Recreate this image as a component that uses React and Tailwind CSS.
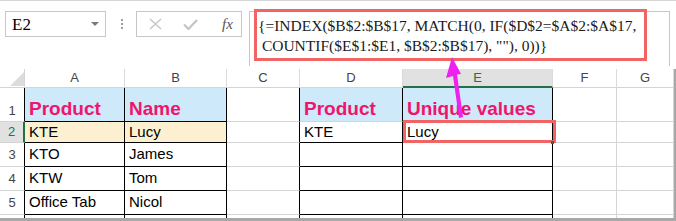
import React from 'react';

const sans = "font-['Liberation_Sans',Arial,sans-serif]";
const serif = "font-['Liberation_Serif','Times_New_Roman',serif]";

const cols = ['A', 'B', 'C', 'D', 'E', 'F', 'G'];

// which columns belong to the two tables (black borders)
const tableCols = { A: true, B: true, D: true, E: true };

const rows = [
  { n: 1, cells: { A: 'Product', B: 'Name', D: 'Product', E: 'Unique values' } },
  { n: 2, cells: { A: 'KTE', B: 'Lucy', D: 'KTE', E: 'Lucy' } },
  { n: 3, cells: { A: 'KTO', B: 'James' } },
  { n: 4, cells: { A: 'KTW', B: 'Tom' } },
  { n: 5, cells: { A: 'Office Tab', B: 'Nicol' } },
];

const HeaderCell = ({ col }) => {
  const active = col === 'E';
  return (
    <div
      className={`flex items-center justify-center text-[13px] border-r border-r-[#dadada] ${
        active
          ? 'bg-[#e1e1e1] text-[#217346] border-b-2 border-b-[#217346]'
          : 'bg-white text-[#444] border-b border-b-[#d4d4d4]'
      }`}
    >
      {col}
    </div>
  );
};

const RowHead = ({ n }) => {
  if (n === 2) {
    return (
      <div className="flex items-center justify-center text-[13px] text-[#217346] bg-[#e1e1e1] border-r-2 border-r-[#217346] border-b border-b-[#d4d4d4]">
        {n}
      </div>
    );
  }
  return (
    <div
      className={`flex justify-center text-[13px] text-[#444] bg-white border-r border-r-black border-b border-b-[#d4d4d4] ${
        n === 1 ? 'items-end pb-[1px]' : 'items-center'
      }`}
    >
      {n}
    </div>
  );
};

const Cell = ({ row, col }) => {
  const text = row.cells[col];
  const inTable = tableCols[col];
  const isHead = row.n === 1;
  let bg = 'bg-white';
  if (inTable && isHead) bg = 'bg-[#cde9fa]';
  if ((col === 'A' || col === 'B') && row.n === 2) bg = 'bg-[#fdf0d0]';

  // right border black where a table edge sits
  const rightBlack = col === 'A' || col === 'B' || col === 'C' || col === 'D' || col === 'E';
  const bottomBlack = inTable && !(isHead && col === 'D');

  return (
    <div
      className={`relative flex pl-[4px] whitespace-nowrap ${bg} border-r ${
        rightBlack ? 'border-r-black' : 'border-r-[#d4d4d4]'
      } border-b ${bottomBlack ? 'border-b-black' : 'border-b-[#d4d4d4]'} ${
        isHead
          ? 'items-end pb-[1px] text-[19px] font-bold text-[#f0156c] leading-[22px]'
          : 'items-center text-[15px] text-black'
      }`}
    >
      {text}
      {col === 'E' && row.n === 2 && (
        <>
          <div className="absolute z-10 left-0 -top-[2px] w-[153px] h-[23px] border-[3px] border-[#f26363]" />
          <div className="absolute z-10 -right-[2px] -bottom-[2px] w-[3px] h-[3px] bg-[#217346]" />
        </>
      )}
    </div>
  );
};

const App = () => {
  return (
    <div className={`relative w-[676px] h-[221px] overflow-hidden bg-white ${sans}`}>
      {/* top bar */}
      <div className="h-[69px] border-t border-t-[#d6d6d6] flex items-start">
        <div className="ml-[5px] mt-[10px] w-[101px] h-[26px] border border-[#c6c6c6] flex items-center justify-between pl-[6px] pr-[6px]">
          <span className={`${serif} text-[17px] text-black leading-none`}>E2</span>
          <svg width="8" height="4" viewBox="0 0 8 4">
            <polygon points="0,0 8,0 4,4" fill="#7a7a7a" />
          </svg>
        </div>
        <div className="ml-[15px] mt-[18px] flex flex-col gap-[2px]">
          <span className="w-[2px] h-[2px] bg-[#9c9c9c]" />
          <span className="w-[2px] h-[2px] bg-[#9c9c9c]" />
          <span className="w-[2px] h-[2px] bg-[#9c9c9c]" />
        </div>
        <div className="ml-[13px] mt-[10px] w-[106px] h-[26px] border border-[#c6c6c6] flex items-center pl-[12px]">
          <svg width="13" height="12" viewBox="0 0 13 12">
            <path d="M1 1 L12 11 M12 1 L1 11" stroke="#c4c4c4" strokeWidth="1.3" fill="none" />
          </svg>
          <svg width="15" height="11" viewBox="0 0 15 11" className="ml-[21px]">
            <path d="M1 5.5 L5.5 10 L14 1" stroke="#c4c4c4" strokeWidth="2.2" fill="none" />
          </svg>
          <span className={`${serif} italic text-[15px] text-[#555] ml-[24px] leading-none`}>fx</span>
        </div>
        <div className="ml-[7px] mt-[10px] w-[421px] h-[55px] border-l border-t border-r border-[#c6c6c6]">
          <div className={`ml-[4px] -mt-[3px] w-[393px] h-[52px] border-[3px] border-[#f26363] pl-[1px] pt-[4px] ${serif} text-[15.5px] leading-[20px] text-[#1a1a1a] whitespace-pre`}>
            <div>{'{=INDEX($B$2:$B$17, MATCH(0, IF($D$2=$A$2:$A$17,'}</div>
            <div>{' COUNTIF($E$1:$E1, $B$2:$B$17), ""), 0))}'}</div>
          </div>
        </div>
      </div>

      {/* sheet */}
      <div className="w-[676px] border-r-2 border-r-[#a8a8a8]">
        <div className="grid grid-cols-[25px_100px_102px_73px_103px_150px_64px_57px] grid-rows-[19px_34px_21px_24px_24px_24px_3px] border-b-[3px] border-b-[#a8a8a8] w-[676px] h-[152px]">
          <div className="relative bg-white border-r border-r-[#d4d4d4] border-b border-b-[#d4d4d4]">
            <svg width="15" height="14" viewBox="0 0 15 14" className="absolute left-[9px] top-[3px]">
              <polygon points="15,0 15,14 1,14" fill="#dcdcdc" />
            </svg>
          </div>
          {cols.map((c) => (
            <HeaderCell key={c} col={c} />
          ))}
          {rows.map((r) => (
            <React.Fragment key={r.n}>
              <RowHead n={r.n} />
              {cols.map((c) => (
                <Cell key={c} row={r} col={c} />
              ))}
            </React.Fragment>
          ))}
          <div className="border-r border-r-black" />
          {cols.map((c) => (
            <div
              key={c}
              className={`border-r ${
                c === 'F' || c === 'G' ? 'border-r-[#d4d4d4]' : 'border-r-black'
              }`}
            />
          ))}
        </div>
      </div>

      {/* annotation arrow */}
      <svg className="absolute z-20 left-0 top-0 pointer-events-none" width="676" height="221" viewBox="0 0 676 221">
        <polygon
          points="452,57 461,74 457,74.5 463,117 459,118 453,76 446,78"
          fill="#ee22ee"
        />
      </svg>
    </div>
  );
};

export default App;
